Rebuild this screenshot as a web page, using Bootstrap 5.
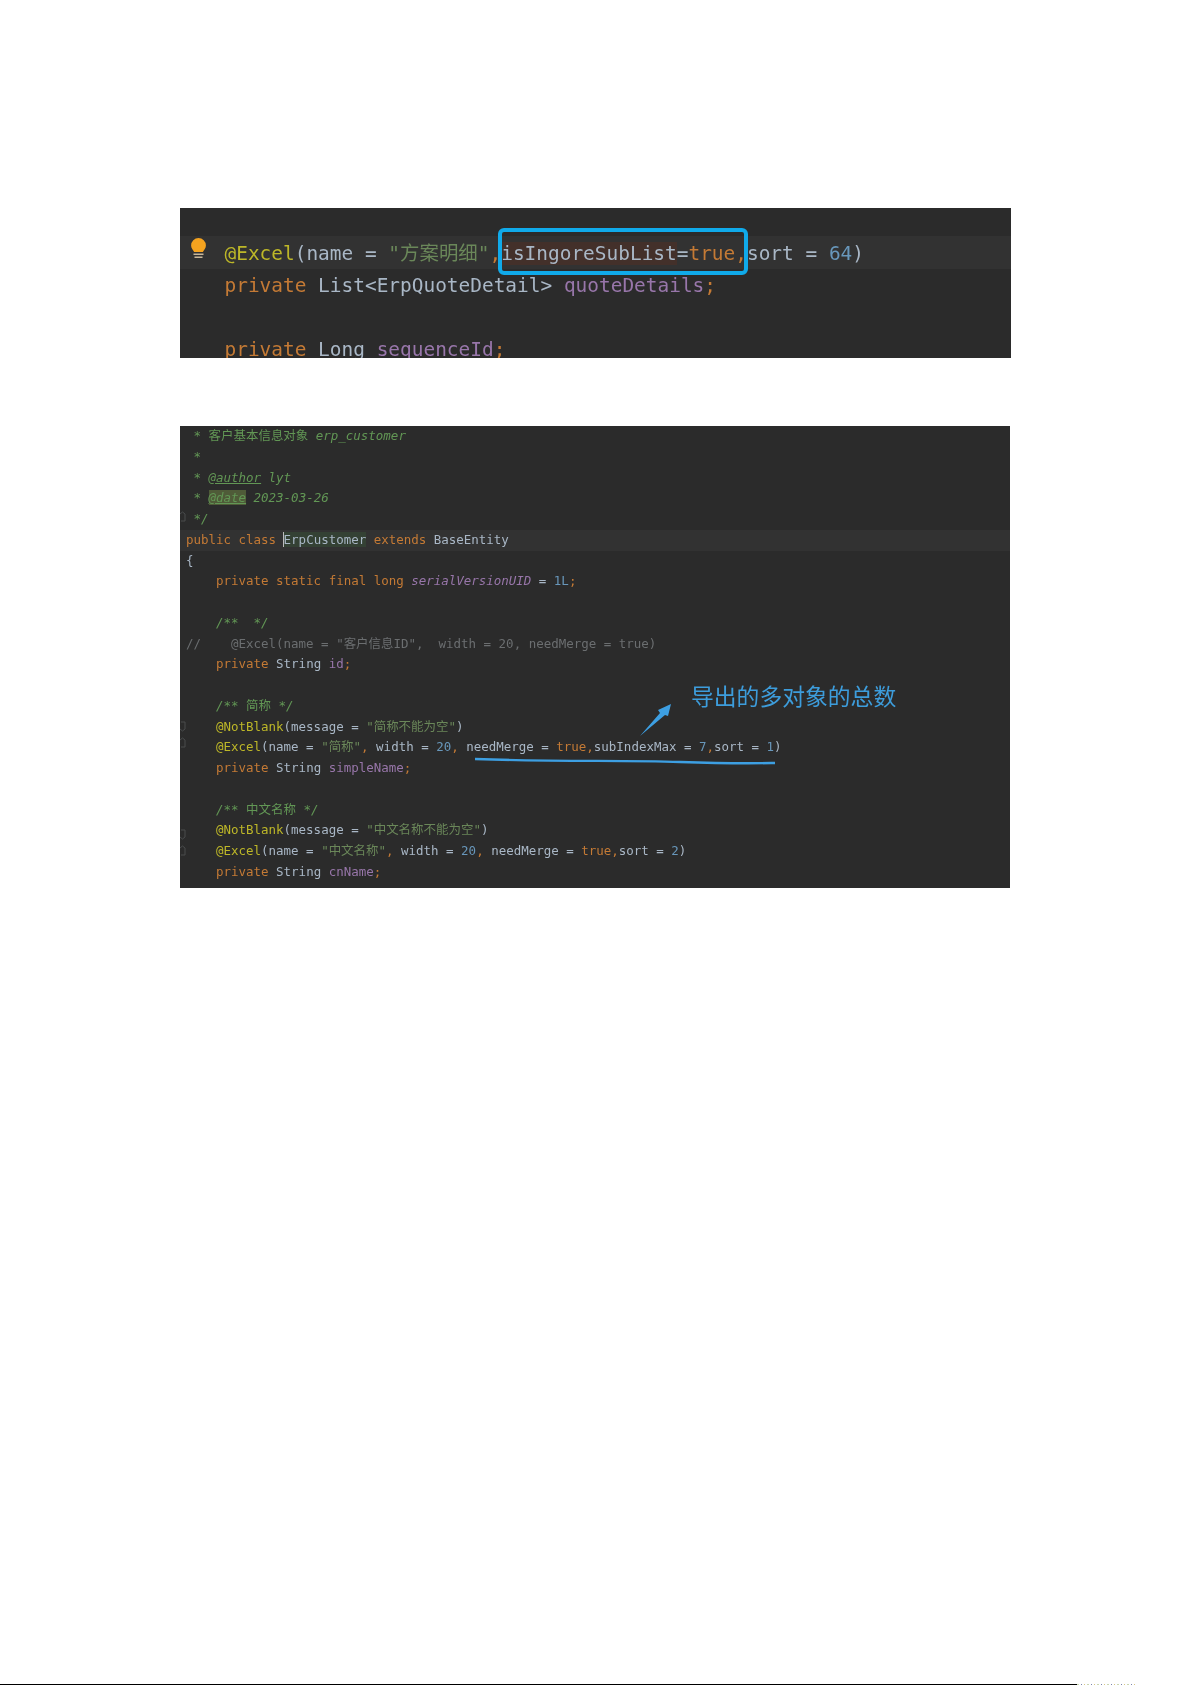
<!DOCTYPE html>
<html lang="zh">
<head>
<meta charset="utf-8">
<title>code</title>
<link rel="stylesheet" href="https://cdn.jsdelivr.net/npm/bootstrap@5.3.0/dist/css/bootstrap.min.css">
<style>
html,body{background:#fff;margin:0}
.sheet{height:1685px;overflow:hidden}
.shot{background:#2b2b2b;overflow:hidden;color:#a9b7c6;font-family:"DejaVu Sans Mono","Noto Sans CJK SC",monospace;filter:blur(.45px);flex:none}
.ln{white-space:pre}
.shot-a{margin:208px 0 0 180px;width:831px;height:150px;font-size:19.45px;padding:28px 0 0 44.500px}
.shot-b{margin:68px 0 0 180px;width:830px;height:462px;font-size:12.48px}
.shot-a .ln{height:32px;line-height:36.500px}
.shot-a .band-a{height:33px;margin-bottom:-1px}
.shot-b .ln{height:20.76px;line-height:20.76px;padding-left:6px}
.band-a{background:#323232;margin-left:-44.500px;padding-left:44.500px}
.shot-b .band-b{background:#323232}
.kw{color:#c47a35}.str{color:#6a8759}.num{color:#6897bb}.ann{color:#bdb728}.fld{color:#9876aa}
.doc{color:#629755;font-style:italic}.tag{text-decoration:underline}.off{color:#6b6e70}
.sel-a{background:#43302a}.tagbg{background:#4f5b38}.cls{background:#344134;box-shadow:-1px 0 0 #bbb}
.hl-box{left:318px;top:20px;width:250px;height:47px;border:4px solid #10aaea;border-radius:6px}
.bulb{left:10px;top:29px}
.note{left:511px;top:255px;font-size:22.8px;line-height:30px;color:#3d9ddc;font-family:"Noto Sans CJK SC",sans-serif}
.draw{left:0;top:0}
.pagefoot{height:1px}
.rule{width:1077px;background:#000;height:1px}
.specks{height:1px;width:58px;background:repeating-linear-gradient(90deg,#c9d6b0 0 2px,#fff 2px 4px,#7d86b0 4px 5px,#fff 5px 7px,#d9c98a 7px 8px,#fff 8px 10px)}
</style>
</head>
<body>
<div class="sheet d-flex flex-column">
  <div class="shot shot-a position-relative">
    <div class="ln band-a"><span class="ann">@Excel</span>(name = <span class="str">"方案明细"</span><span class="kw">,</span><span class="sel-a">isIngoreSubList</span>=<span class="kw">true,</span>sort = <span class="num">64</span>)</div>
    <div class="ln"><span class="kw">private</span> List&lt;ErpQuoteDetail&gt; <span class="fld">quoteDetails</span><span class="kw">;</span></div>
    <div class="ln"> </div>
    <div class="ln"><span class="kw">private</span> Long <span class="fld">sequenceId</span><span class="kw">;</span></div>
    <div class="hl-box position-absolute"></div>
    <svg class="bulb position-absolute" width="17" height="24" viewBox="0 0 17 24"><path d="M8.500 1a7.400 7.400 0 0 1 7.400 7.400c0 3-2 4.400-3 6.600H4.100c-1-2.200-3-3.600-3-6.600A7.400 7.400 0 0 1 8.500 1z" fill="#f5a31f"/><rect x="3.500" y="16.500" width="10" height="1.500" fill="#c9b79a"/><rect x="4.500" y="19.500" width="8" height="1.500" fill="#c9b79a"/></svg>
  </div>

  <div class="shot shot-b position-relative">
    <div>
      <div class="ln doc"> * <span class="fst-normal">客户基本信息对象</span> erp_customer</div>
      <div class="ln doc"> *</div>
      <div class="ln doc"> * <span class="tag">@author</span> lyt</div>
      <div class="ln doc"> * <span class="tag tagbg">@date</span> 2023-03-26</div>
      <div class="ln doc"> */</div>
      <div class="ln band-b"><span class="kw">public class</span> <span class="cls">ErpCustomer</span> <span class="kw">extends</span> BaseEntity</div>
      <div class="ln">{</div>
      <div class="ln">    <span class="kw">private static final long</span> <span class="fld fst-italic">serialVersionUID</span> = <span class="num">1L</span><span class="kw">;</span></div>
      <div class="ln"> </div>
      <div class="ln doc">    /**  */</div>
      <div class="ln off">//    @Excel(name = "客户信息ID",  width = 20, needMerge = true)</div>
      <div class="ln">    <span class="kw">private</span> String <span class="fld">id</span><span class="kw">;</span></div>
      <div class="ln"> </div>
      <div class="ln doc">    /** <span class="fst-normal">简称</span> */</div>
      <div class="ln">    <span class="ann">@NotBlank</span>(message = <span class="str">"简称不能为空"</span>)</div>
      <div class="ln">    <span class="ann">@Excel</span>(name = <span class="str">"简称"</span><span class="kw">,</span> width = <span class="num">20</span><span class="kw">,</span> needMerge = <span class="kw">true,</span>subIndexMax = <span class="num">7</span><span class="kw">,</span>sort = <span class="num">1</span>)</div>
      <div class="ln">    <span class="kw">private</span> String <span class="fld">simpleName</span><span class="kw">;</span></div>
      <div class="ln"> </div>
      <div class="ln doc">    /** <span class="fst-normal">中文名称</span> */</div>
      <div class="ln">    <span class="ann">@NotBlank</span>(message = <span class="str">"中文名称不能为空"</span>)</div>
      <div class="ln">    <span class="ann">@Excel</span>(name = <span class="str">"中文名称"</span><span class="kw">,</span> width = <span class="num">20</span><span class="kw">,</span> needMerge = <span class="kw">true,</span>sort = <span class="num">2</span>)</div>
      <div class="ln">    <span class="kw">private</span> String <span class="fld">cnName</span><span class="kw">;</span></div>
    </div>
    <div class="note position-absolute">导出的多对象的总数</div>
    <svg class="draw position-absolute" width="830" height="462" viewBox="0 0 830 462">
      <path d="M295 333 C380 336 440 334 500 336 S590 337 595 337" fill="none" stroke="#3d9fe2" stroke-width="2.400"/>
      <path d="M460 310 L480 287 L478 284 L491 278 L488 290 L485 289 Z" fill="#3d9fe2"/>
      <g fill="none" stroke="#4a4c4d" stroke-width="1">
        <path d="M1 95 h4 v-7 l-2.500-2 -2.500 2"/>
        <path d="M1 296 h4 v7 l-2.500 2 -2.500-2"/>
        <path d="M1 321 h4 v-7 l-2.500-2 -2.500 2"/>
        <path d="M1 404 h4 v7 l-2.500 2 -2.500-2"/>
        <path d="M1 429 h4 v-7 l-2.500-2 -2.500 2"/>
      </g>
    </svg>
  </div>

  <div class="pagefoot mt-auto d-flex"><div class="rule"></div><div class="specks"></div></div>
</div>
</body>
</html>
